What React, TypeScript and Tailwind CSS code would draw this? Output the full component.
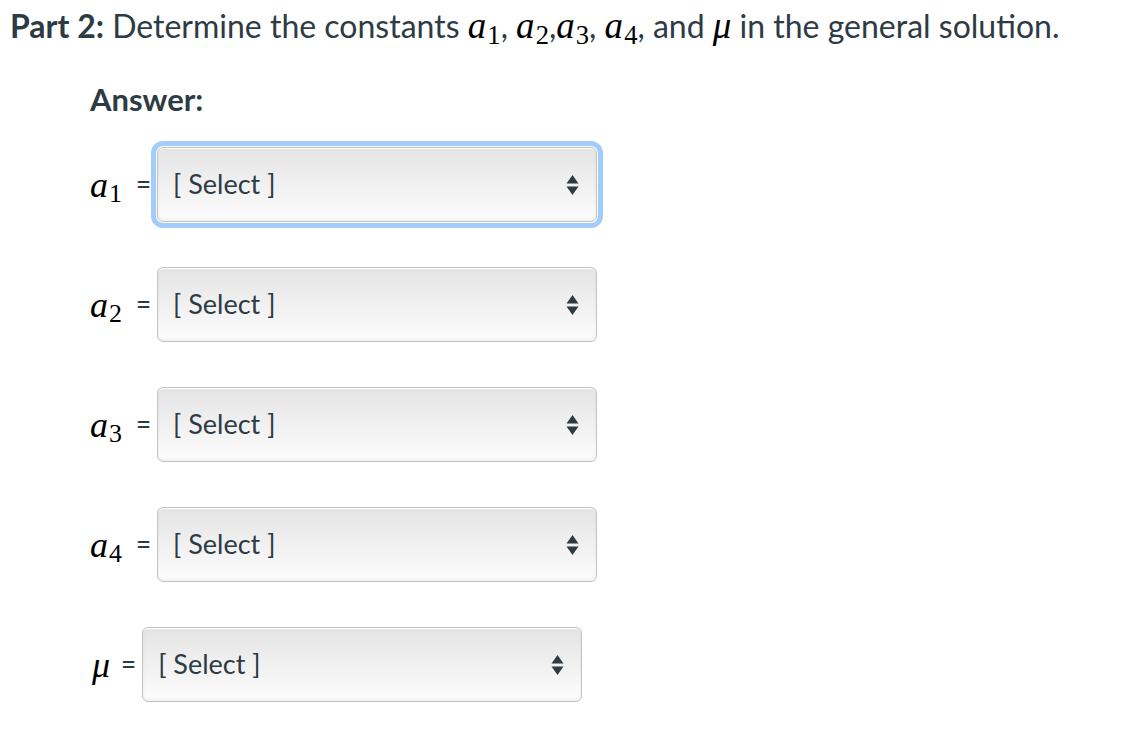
import React from "react";

const mathFont = { fontFamily: '"Liberation Serif", "DejaVu Serif", serif' };

const Sym = ({ base, sub, size }: { base: string; sub?: string; size: string }) => (
  <span className={`${size} whitespace-nowrap text-black`} style={mathFont}>
    <i>{base}</i>
    {sub ? <span className="relative top-[0.22em] pl-[0.04em] text-[0.72em]">{sub}</span> : null}
  </span>
);

const SelectBox = ({ focused }: { focused?: boolean }) => (
  <div
    className={`relative flex h-[75px] w-[440px] items-center rounded-[6px] border border-[#c3c3c3] bg-gradient-to-b from-[#e4e4e4] to-[#fdfdfd] shadow-[inset_0_-2px_3px_rgba(0,0,0,0.06),inset_0_1px_0_#fff] ${
      focused ? "outline-[5px] outline-solid outline-[#a2ccfa] outline-offset-[1px]" : ""
    }`}
  >
    <span className="pl-[15px] text-[27px] text-[#2d3b45]">[ Select ]</span>
    <svg
      className="absolute right-[17px] top-1/2 -translate-y-1/2"
      width="13"
      height="22"
      viewBox="0 0 13 22"
    >
      <path d="M6.5 1 L12.5 9.5 L0.5 9.5 Z" fill="#2d3b45" />
      <path d="M0.5 12.5 L12.5 12.5 L6.5 21 Z" fill="#2d3b45" />
    </svg>
  </div>
);

const rows = [
  { base: "a", sub: "1", focused: true },
  { base: "a", sub: "2" },
  { base: "a", sub: "3" },
  { base: "a", sub: "4" },
  { base: "μ" },
];

export default function App() {
  return (
    <div
      className="min-h-[738px] bg-white px-[10px] pt-[4px] text-[#2d3b45]"
      style={{ fontFamily: 'Lato, "Noto Sans", sans-serif' }}
    >
      <h2 className="text-[32px] leading-[44px]">
        <b className="font-bold">Part 2:</b> Determine the constants{" "}
        <Sym base="a" sub="1" size="text-[37px]" />,{" "}
        <Sym base="a" sub="2" size="text-[37px]" />,
        <Sym base="a" sub="3" size="text-[37px]" />,{" "}
        <Sym base="a" sub="4" size="text-[37px]" />, and{" "}
        <Sym base="μ" size="text-[37px]" /> in the general solution.
      </h2>
      <div className="pl-[80px]">
        <div className="mt-[28px] text-[31px] font-bold leading-[40px]">Answer:</div>
        <div className="mt-[28px] flex flex-col gap-[45px]">
          {rows.map((r, i) => (
            <div key={i} className="flex h-[75px] items-center">
              <span className={r.sub ? "" : "pl-[2px]"}>
                <Sym base={r.base} sub={r.sub} size="text-[36px]" />
              </span>
              <span className={`${r.sub ? "ml-[14px]" : "ml-[11px]"} mr-[6px] text-[26px] font-medium`}>=</span>
              <SelectBox focused={r.focused} />
            </div>
          ))}
        </div>
      </div>
    </div>
  );
}
